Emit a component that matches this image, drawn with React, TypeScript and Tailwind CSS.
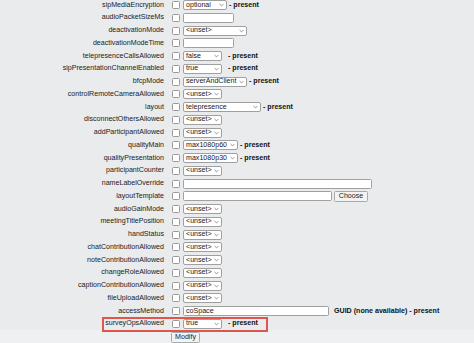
import React from 'react';

type Control =
  | { kind: 'select'; value: string; w: number }
  | { kind: 'input'; value?: string; w: number };

interface Row {
  label: string;
  control: Control;
  present?: boolean;
  presentGap?: number;
  extra?: 'choose' | 'guid';
  highlight?: boolean;
}

const unset = (): Control => ({ kind: 'select', value: '<unset>', w: 39 });

const rows: Row[] = [
  { label: 'sipMediaEncryption', control: { kind: 'select', value: 'optional', w: 44 }, present: true },
  { label: 'audioPacketSizeMs', control: { kind: 'input', w: 51 } },
  { label: 'deactivationMode', control: { kind: 'select', value: '<unset>', w: 64 } },
  { label: 'deactivationModeTime', control: { kind: 'input', w: 51 } },
  { label: 'telepresenceCallsAllowed', control: { kind: 'select', value: 'false', w: 39 }, present: true, presentGap: 6 },
  { label: 'sipPresentationChannelEnabled', control: { kind: 'select', value: 'true', w: 39 }, present: true, presentGap: 6 },
  { label: 'bfcpMode', control: { kind: 'select', value: 'serverAndClient', w: 64 }, present: true },
  { label: 'controlRemoteCameraAllowed', control: unset() },
  { label: 'layout', control: { kind: 'select', value: 'telepresence', w: 78 }, present: true },
  { label: 'disconnectOthersAllowed', control: unset() },
  { label: 'addParticipantAllowed', control: unset() },
  { label: 'qualityMain', control: { kind: 'select', value: 'max1080p60', w: 55 }, present: true },
  { label: 'qualityPresentation', control: { kind: 'select', value: 'max1080p30', w: 55 }, present: true },
  { label: 'participantCounter', control: unset() },
  { label: 'nameLabelOverride', control: { kind: 'input', w: 189 } },
  { label: 'layoutTemplate', control: { kind: 'input', w: 149 }, extra: 'choose' },
  { label: 'audioGainMode', control: unset() },
  { label: 'meetingTitlePosition', control: unset() },
  { label: 'handStatus', control: unset() },
  { label: 'chatContributionAllowed', control: unset() },
  { label: 'noteContributionAllowed', control: unset() },
  { label: 'changeRoleAllowed', control: unset() },
  { label: 'captionContributionAllowed', control: unset() },
  { label: 'fileUploadAllowed', control: unset() },
  { label: 'accessMethod', control: { kind: 'input', value: 'coSpace', w: 146 }, extra: 'guid' },
  { label: 'surveyOpsAllowed', control: { kind: 'select', value: 'true', w: 39 }, present: true, presentGap: 6, highlight: true },
];

function Chevron() {
  return (
    <svg width="5" height="4" viewBox="0 0 5 4" className="shrink-0">
      <path d="M0.6 1 L2.5 2.9 L4.4 1" fill="none" stroke="#7a7a7a" strokeWidth="0.8" />
    </svg>
  );
}

function Field({ control }: { control: Control }) {
  if (control.kind === 'select') {
    return (
      <div
        className="flex h-[10px] items-center justify-between rounded-[2px] border border-[#a0a0a0] bg-white pl-[2px] pr-[2px]"
        style={{ width: control.w }}
      >
        <span className="leading-none text-[#1a1a1a]">{control.value}</span>
        <Chevron />
      </div>
    );
  }
  return (
    <div
      className="flex h-[10px] items-center rounded-[1.5px] border border-[#a0a0a0] bg-white pl-[2px]"
      style={{ width: control.w }}
    >
      <span className="leading-none text-[#1a1a1a]">{control.value ?? ''}</span>
    </div>
  );
}

export default function App(): React.ReactElement {
  return (
    <div
      className="h-[343px] w-[474px] overflow-hidden bg-[#e9ebec] text-[7.1px] text-[#222]"
      style={{ fontFamily: '"Liberation Sans", Arial, sans-serif' }}
    >
      <div className="-mt-[1.3px] flex flex-col">
        {rows.map((row) => (
          <div key={row.label} className="relative flex h-[12.75px] shrink-0 items-center">
            {row.highlight && (
              <div className="pointer-events-none absolute top-0 left-[102px] h-[15px] w-[166px] border-2 border-[#e0554c]" />
            )}
            <div className="w-[164px] shrink-0 text-right leading-none">{row.label}</div>
            <div className="ml-[8px] h-[8px] w-[8px] shrink-0 rounded-[1.5px] border border-[#999] bg-white" />
            <div className="ml-[3px] flex items-center">
              <Field control={row.control} />
              {row.present && (
                <span className="font-bold leading-none text-[#111]" style={{ marginLeft: row.presentGap ?? 2 }}>
                  - present
                </span>
              )}
              {row.extra === 'choose' && (
                <button className="ml-[2px] flex h-[11px] w-[34px] items-center justify-center rounded-[1.5px] border border-[#a9a9a9] bg-[#f3f3f3] leading-none text-[#222]">
                  Choose
                </button>
              )}
              {row.extra === 'guid' && (
                <span className="ml-[5px] font-bold leading-none text-[#111]">GUID (none available) - present</span>
              )}
            </div>
          </div>
        ))}
        <div className="flex h-[16px] shrink-0 items-start bg-[#eef0f1] pt-[1.5px]">
          <button className="ml-[171px] flex h-[11px] w-[29px] items-center justify-center rounded-[1.5px] border border-[#a9a9a9] bg-[#f3f3f3] leading-none text-[#222]">
            Modify
          </button>
        </div>
      </div>
    </div>
  );
}
